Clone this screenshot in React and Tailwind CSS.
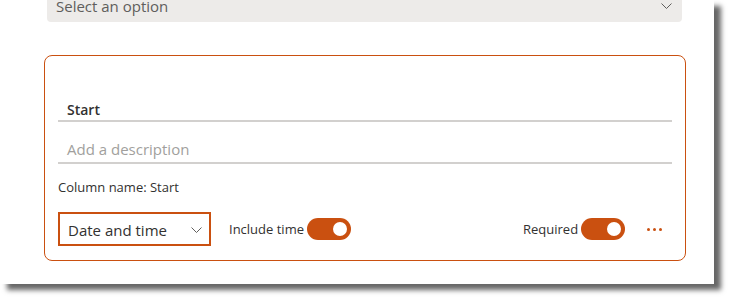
import React from "react";

function Toggle() {
  return (
    <div className="w-[44px] h-[22px] rounded-full bg-[#ca5010] flex items-center justify-end pr-[4px] shrink-0">
      <div className="w-[14px] h-[14px] rounded-full bg-white" />
    </div>
  );
}

function Chevron({ className }) {
  return (
    <svg className={className} width="11" height="6" viewBox="0 0 11 6" fill="none">
      <path d="M0.5 0.5 L5.5 5.5 L10.5 0.5" stroke="#605e5c" strokeWidth="1" />
    </svg>
  );
}

export default function App() {
  return (
    <div className="w-[729px] h-[299px] bg-white overflow-hidden font-['Open_Sans',sans-serif]">
      <div className="w-[714px] h-[284px] bg-white shadow-[7px_6px_5px_rgba(0,0,0,0.6)] flex flex-col">
        <div className="ml-[47px] w-[635px] -mt-[10px] h-[32px] bg-[#edebe9] rounded-[4px] flex items-center justify-between pl-[9px] pr-[10px] shrink-0">
          <span className="text-[15px] leading-[20px] text-[#605e5c]">Select an option</span>
          <Chevron className="-mt-[1px]" />
        </div>

        <div className="mt-[33px] ml-[44px] w-[642px] h-[206px] border border-[#ca5010] rounded-[8px] px-[13px] pt-[34px] flex flex-col shrink-0">
          <div className="h-[32px] border-b-2 border-[#d2d0ce] flex items-end pb-[0px] pl-[9px]">
            <span className="text-[14px] leading-[20px] font-semibold text-[#323130]">Start</span>
          </div>
          <div className="h-[42px] border-b-2 border-[#d2d0ce] flex items-end pb-[3px] pl-[9px]">
            <span className="text-[15px] leading-[20px] text-[#a19f9d]">Add a description</span>
          </div>
          <div className="mt-[14px] text-[13px] leading-[18px] text-[#323130]">Column name: Start</div>

          <div className="mt-[16px] h-[34px] flex items-center">
            <div className="w-[153px] h-[34px] border-2 border-[#ca5010] flex items-center justify-between pl-[8px] pr-[7px] pt-[1px] shrink-0">
              <span className="text-[15px] leading-[20px] text-[#323130]">Date and time</span>
              <Chevron />
            </div>
            <div className="ml-[18px] w-[78px] text-[13px] leading-[18px] text-[#323130] shrink-0 whitespace-nowrap">Include time</div>
            <Toggle />
            <div className="flex-1" />
            <div className="w-[58px] text-[13px] leading-[18px] text-[#323130] shrink-0 whitespace-nowrap">Required</div>
            <Toggle />
            <div className="ml-[22px] mr-[10px] flex items-center gap-[3px]">
              <div className="w-[3px] h-[3px] rounded-full bg-[#ca5010]" />
              <div className="w-[3px] h-[3px] rounded-full bg-[#ca5010]" />
              <div className="w-[3px] h-[3px] rounded-full bg-[#ca5010]" />
            </div>
          </div>
        </div>
      </div>
    </div>
  );
}
